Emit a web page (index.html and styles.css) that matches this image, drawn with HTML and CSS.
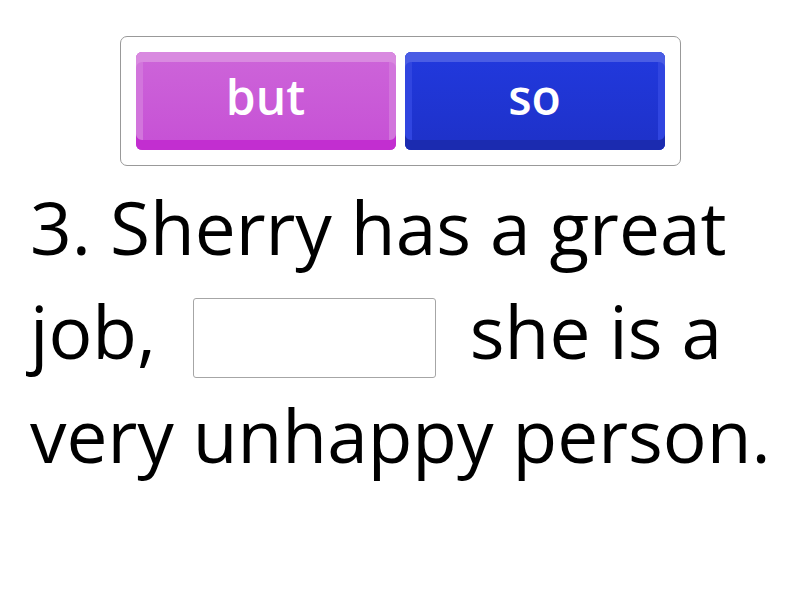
FILE: index.html
```html
<!DOCTYPE html>
<html lang="en">
<head>
    <meta charset="UTF-8">
    <title>Missing word</title>
    <link rel="stylesheet" href="styles.css">
</head>
<body>
    <div class="options">
        <div class="tile tile-pink">but</div>
        <div class="tile tile-blue">so</div>
    </div>

    <div class="question">
        3. Sherry has a great job, <span class="blank"></span> she is a very unhappy person.
    </div>
</body>
</html>
```

FILE: styles.css
```css
* {
    margin: 0;
    padding: 0;
    box-sizing: border-box;
}

body {
    font-family: 'Open Sans', 'Liberation Sans', sans-serif;
    background: white;
    width: 800px;
    height: 600px;
    overflow: hidden;
}

.options {
    width: 561px;
    margin: 36px auto 0;
    padding: 15px;
    border: 1px solid #999;
    border-radius: 7px;
    display: flex;
    gap: 9px;
}

.tile {
    flex: 1;
    height: 98px;
    border-radius: 6px;
    color: white;
    font-size: 48px;
    font-weight: 600;
    display: flex;
    align-items: center;
    justify-content: center;
    padding-bottom: 9px;
}

.tile-pink {
    background: linear-gradient(#cd65d9, #c650d5);
    box-shadow: inset 0 10px 0 #d98ae0, inset 0 -10px 0 #c22ed0, inset 7px 0 0 #d275dc, inset -7px 0 0 #d275dc;
}

.tile-blue {
    background: linear-gradient(#2139de, #1e31c8);
    box-shadow: inset 0 10px 0 #4a5de4, inset 0 -10px 0 #1b2bb0, inset 7px 0 0 #3045e0, inset -7px 0 0 #3045e0;
}

.question {
    margin-top: 9px;
    padding: 0 20px 0 30px;
    font-size: 73px;
    line-height: 104px;
    color: black;
}

.blank {
    display: inline-block;
    width: 243px;
    height: 80px;
    border: 1px solid #a6a6a6;
    border-radius: 3px;
    vertical-align: -19px;
    margin: 0 15px 0 18px;
}
```
